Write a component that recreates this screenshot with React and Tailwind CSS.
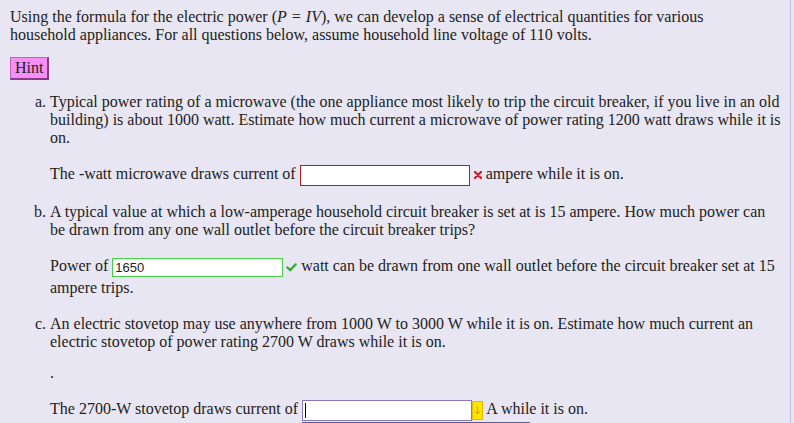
export default function App() {
  return (
    <div className="min-h-[423px] w-[794px] bg-[#e8e6f2] overflow-hidden">
      <div
        className="relative w-[791px] h-[423px] border-r border-[#c3bfe0] pl-[10px] pr-[6px] pt-[8px] text-[16px] leading-[18px] text-[#222]"
        style={{ fontFamily: '"Liberation Serif", "Times New Roman", serif' }}
      >
        {/* Intro */}
        <p>
          Using the formula for the electric power (<i>P</i>
          <span className="mx-[5px]">=</span>
          <i>IV</i>), we can develop a sense of electrical quantities for various
          <br />
          household appliances. For all questions below, assume household line voltage of 110 volts.
        </p>

        <button className="mt-[13px] h-[23px] px-[4px] bg-[#f58ff5] border border-[#c060c0] border-r-2 border-b-2 border-r-[#8a3a8a] border-b-[#8a3a8a] text-[16px] leading-[18px] text-[#222]">
          Hint
        </button>

        <ol className="mt-[13px] pl-[40px] list-[lower-alpha]">
          {/* a */}
          <li>
            <p>
              Typical power rating of a microwave (the one appliance most likely to trip the circuit breaker, if you live in an old
              building) is about 1000 watt. Estimate how much current a microwave of power rating 1200 watt draws while it is
              on.
            </p>
            <p className="mt-[15px] leading-[24px]">
              The -watt microwave draws current of{' '}
              <span className="inline-block align-middle w-[170px] h-[21px] bg-white border border-[#c4161c]" />
              <svg className="inline-block align-middle ml-[4px]" width="8" height="8" viewBox="0 0 8 8">
                <path d="M1 1 L7 7 M7 1 L1 7" stroke="#d0202a" strokeWidth="2.4" strokeLinecap="round" />
              </svg>
              {' '}ampere while it is on.
            </p>
          </li>

          {/* b */}
          <li className="mt-[17px]">
            <p>
              A typical value at which a low-amperage household circuit breaker is set at is 15 ampere. How much power can
              be drawn from any one wall outlet before the circuit breaker trips?
            </p>
            <p className="mt-[16px] leading-[22px]">
              Power of{' '}
              <span
                className="inline-block align-middle w-[171px] h-[19px] bg-white border border-[#44d444] px-[2px] text-[13px] leading-[17px] text-[#222]"
                style={{ fontFamily: '"Liberation Sans", Arial, sans-serif' }}
              >
                1650
              </span>
              <svg className="inline-block align-middle ml-[3px]" width="11" height="9" viewBox="0 0 11 9">
                <path d="M1.5 4.5 L4.2 7.2 L9.5 1.5" fill="none" stroke="#36a836" strokeWidth="2.4" strokeLinecap="round" strokeLinejoin="round" />
              </svg>
              {' '}watt can be drawn from one wall outlet before the circuit breaker set at 15 ampere trips.
            </p>
          </li>

          {/* c */}
          <li className="mt-[16px]">
            <p>
              An electric stovetop may use anywhere from 1000 W to 3000 W while it is on. Estimate how much current an
              electric stovetop of power rating 2700 W draws while it is on.
            </p>
            <p className="mt-[13px]">.</p>
            <p className="mt-[15px] leading-[24px]">
              The 2700-W stovetop draws current of{' '}
              <span className="relative inline-block align-middle w-[170px] h-[21px] bg-white border border-[#8a78b8]">
                <span className="absolute left-[2px] top-[2px] w-[1px] h-[15px] bg-black" />
                <span
                  className="absolute left-[-1px] top-[21px] w-[228px] h-[16px] bg-[#5b5a96] text-white text-[11px] leading-[16px] px-[8px] whitespace-nowrap"
                  style={{ fontFamily: '"Liberation Sans", Arial, sans-serif' }}
                >
                  Enter an integer or decimal number [more..]
                </span>
              </span>
              <span className="inline-flex align-middle items-center justify-center w-[11px] h-[19px] bg-[#ffe600] border border-[#e8b800]">
                <svg width="7" height="9" viewBox="0 0 7 9">
                  <path d="M3.5 0.5 V8 M0.8 5.2 L3.5 8 L6.2 5.2" fill="none" stroke="#e89000" strokeWidth="1" />
                </svg>
              </span>
              {' '}A while it is on.
            </p>
          </li>
        </ol>
      </div>
    </div>
  );
}
